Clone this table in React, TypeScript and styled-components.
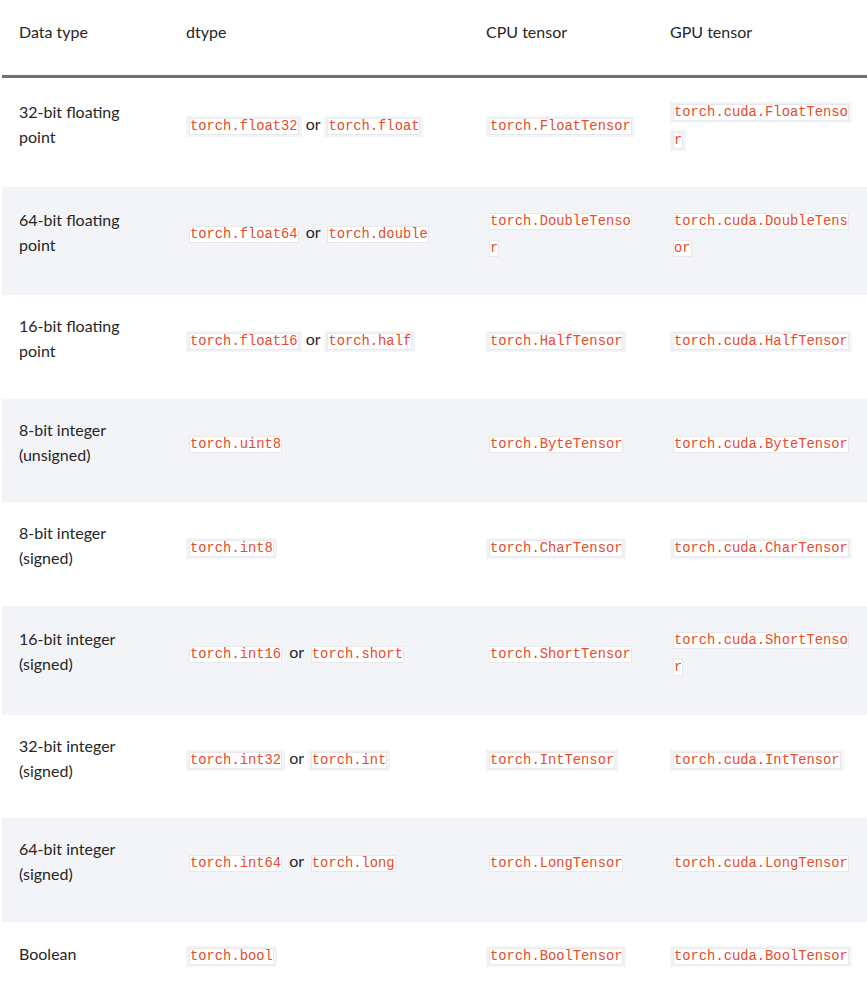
import React from "react";
import styled, { createGlobalStyle } from "styled-components";

const Global = createGlobalStyle`
  html, body { margin: 0; padding: 0; background: #fff; }
  body { overflow: hidden; }
  *, *::before, *::after { box-sizing: border-box; }
`;

const Wrap = styled.div`
  padding-left: 2px;
  font-family: Lato, "Open Sans", sans-serif;
  color: #262626;
`;

const Table = styled.table`
  width: 865px;
  table-layout: fixed;
  border-collapse: collapse;
  border-spacing: 0;
  font-size: 16px;
  line-height: 25px;
`;

const HeadCell = styled.th<{ $w: number }>`
  width: ${(p) => p.$w}px;
  text-align: left;
  font-weight: 400;
  padding: 19px 14px 31px 17px;
  border-bottom: 3px solid #707070;
  vertical-align: middle;
`;

const Row = styled.tr<{ $alt: boolean }>`
  background: ${(p) => (p.$alt ? "#f3f4f7" : "#ffffff")};
`;

const Cell = styled.td`
  padding: 18px 14px 18px 17px;
  vertical-align: middle;
`;

const Para = styled.p<{ $code?: boolean }>`
  margin: 0 0 17.5px 0;
  line-height: ${(p) => (p.$code ? "27.6px" : "25px")};
`;

const Code = styled.code`
  font-family: "Liberation Mono", "DejaVu Sans Mono", monospace;
  font-size: 13.8px;
  line-height: 1;
  color: #e44c2c;
  background: #f3f4f7;
  padding: 3px 3px;
  -webkit-box-decoration-break: clone;
  box-decoration-break: clone;
  word-break: break-all;
`;

const Pre = styled.span`
  background: #ffffff;
  border: 1px solid #e8e8ea;
  -webkit-box-decoration-break: clone;
  box-decoration-break: clone;
`;

type Entry = { label: string; dtypes: string[]; cpu: string; gpu: string };

const rows: Entry[] = [
  { label: "32-bit floating point", dtypes: ["torch.float32", "torch.float"], cpu: "torch.FloatTensor", gpu: "torch.cuda.FloatTensor" },
  { label: "64-bit floating point", dtypes: ["torch.float64", "torch.double"], cpu: "torch.DoubleTensor", gpu: "torch.cuda.DoubleTensor" },
  { label: "16-bit floating point", dtypes: ["torch.float16", "torch.half"], cpu: "torch.HalfTensor", gpu: "torch.cuda.HalfTensor" },
  { label: "8-bit integer (unsigned)", dtypes: ["torch.uint8"], cpu: "torch.ByteTensor", gpu: "torch.cuda.ByteTensor" },
  { label: "8-bit integer (signed)", dtypes: ["torch.int8"], cpu: "torch.CharTensor", gpu: "torch.cuda.CharTensor" },
  { label: "16-bit integer (signed)", dtypes: ["torch.int16", "torch.short"], cpu: "torch.ShortTensor", gpu: "torch.cuda.ShortTensor" },
  { label: "32-bit integer (signed)", dtypes: ["torch.int32", "torch.int"], cpu: "torch.IntTensor", gpu: "torch.cuda.IntTensor" },
  { label: "64-bit integer (signed)", dtypes: ["torch.int64", "torch.long"], cpu: "torch.LongTensor", gpu: "torch.cuda.LongTensor" },
  { label: "Boolean", dtypes: ["torch.bool"], cpu: "torch.BoolTensor", gpu: "torch.cuda.BoolTensor" },
];

const Lit = ({ text }: { text: string }) => (
  <Code>
    <Pre>{text}</Pre>
  </Code>
);

export default function App() {
  return (
    <Wrap>
      <Global />
      <Table>
        <thead>
          <tr>
            <HeadCell $w={167}>Data type</HeadCell>
            <HeadCell $w={300}>dtype</HeadCell>
            <HeadCell $w={184}>CPU tensor</HeadCell>
            <HeadCell $w={214}>GPU tensor</HeadCell>
          </tr>
        </thead>
        <tbody>
          {rows.map((r, i) => (
            <Row key={r.label} $alt={i % 2 === 1}>
              <Cell>
                <Para>{r.label}</Para>
              </Cell>
              <Cell>
                <Para $code>
                  {r.dtypes.map((d, j) => (
                    <React.Fragment key={d}>
                      {j > 0 && " or "}
                      <Lit text={d} />
                    </React.Fragment>
                  ))}
                </Para>
              </Cell>
              <Cell>
                <Para $code>
                  <Lit text={r.cpu} />
                </Para>
              </Cell>
              <Cell>
                <Para $code>
                  <Lit text={r.gpu} />
                </Para>
              </Cell>
            </Row>
          ))}
        </tbody>
      </Table>
    </Wrap>
  );
}
